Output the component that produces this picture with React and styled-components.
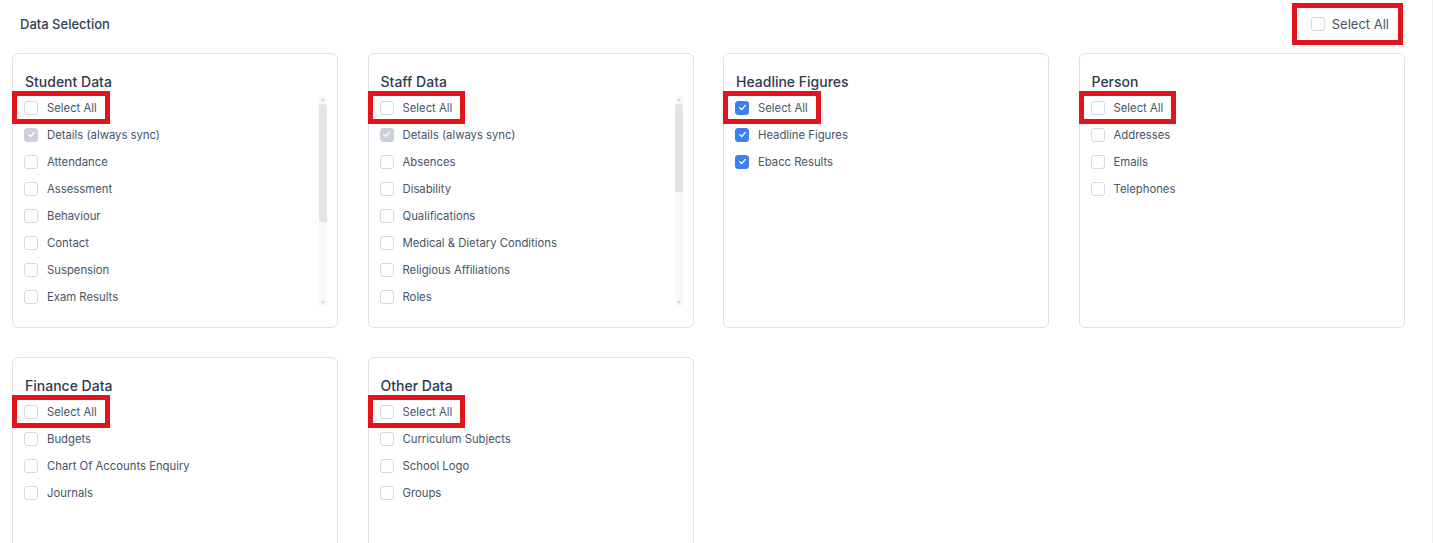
import React from "react";
import styled, { createGlobalStyle } from "styled-components";

const GlobalStyle = createGlobalStyle`
  html, body { margin: 0; padding: 0; background: #ffffff; }
  body { font-family: Inter, "Noto Sans", sans-serif; color: #344054; }
  * { box-sizing: border-box; }
`;

const Page = styled.div`
  width: 1433px;
  height: 543px;
  overflow: hidden;
  border-right: 1px solid #eef0f3;
`;

const Header = styled.div`
  height: 46px;
  display: flex;
  align-items: center;
  justify-content: space-between;
  padding: 0 29px 0 20px;
`;

const PageTitle = styled.h2`
  margin: 0;
  font-size: 13px;
  font-weight: 500;
  color: #344054;
  position: relative;
  top: 1px;
`;

const TopSelect = styled.label`
  height: 42px;
  display: flex;
  align-items: center;
  gap: 7px;
  border: 5px solid #e3141c;
  padding: 0 9px 0 14px;
  font-size: 13px;
  color: #475467;
  margin-top: 2px;
`;

const Grid = styled.div`
  margin-top: 7px;
  padding-left: 12px;
  display: grid;
  grid-template-columns: repeat(4, 326px);
  grid-auto-rows: 275px;
  column-gap: 29.5px;
  row-gap: 29px;
`;

const Card = styled.section`
  border: 1px solid #dde1e7;
  border-radius: 6px;
  padding: 19px 10px 0 11px;
  background: #fff;
  display: flex;
  flex-direction: column;
`;

const CardTitle = styled.h3`
  margin: 0 0 3px 1px;
  font-size: 14px;
  line-height: 18px;
  font-weight: 500;
  color: #2f3b4f;
`;

const ListArea = styled.div`
  display: flex;
  align-items: flex-start;
  height: 216px;
`;

const List = styled.div`
  flex: 1;
  min-width: 0;
`;

const ScrollTrack = styled.div`
  position: relative;
  width: 8px;
  height: 210px;
  margin-top: 2px;
  background: #f8f8f9;
  padding-top: 8px;

  &::before,
  &::after {
    content: "";
    position: absolute;
    left: 2px;
    border-left: 2px solid transparent;
    border-right: 2px solid transparent;
  }
  &::before {
    top: 2px;
    border-bottom: 3px solid #d6d6da;
  }
  &::after {
    bottom: 2px;
    border-top: 3px solid #d6d6da;
  }
`;

const ScrollThumb = styled.div`
  width: 8px;
  height: ${(p) => p.$size}px;
  background: #e4e4e8;
  border-radius: 3px 3px 1px 1px;
`;

const Row = styled.label`
  position: relative;
  display: inline-flex;
  align-items: center;
  gap: 9px;
  height: 27px;
  font-size: 11.3px;
  color: #475467;
  white-space: nowrap;
  vertical-align: top;
`;

const RowLine = styled.div`
  height: 27px;
`;

const Highlight = styled.span`
  position: absolute;
  left: -12px;
  right: -13px;
  top: -3px;
  bottom: -3px;
  border: 5px solid #e3141c;
  pointer-events: none;
`;

const Box = styled.span`
  width: 14px;
  height: 14px;
  flex: 0 0 14px;
  border-radius: 3px;
  border: 1px solid
    ${(p) => (p.$state === "on" ? "#3b7ff0" : p.$state === "locked" ? "#ccd0da" : "#d5d9e0")};
  background: ${(p) => (p.$state === "on" ? "#3b7ff0" : p.$state === "locked" ? "#ccd0da" : "#fff")};
  display: inline-flex;
  align-items: center;
  justify-content: center;
`;

function Check({ state }) {
  return (
    <Box $state={state}>
      {state !== "off" && (
        <svg width="9" height="9" viewBox="0 0 10 10" fill="none">
          <path d="M2 5.3L4.1 7.3L8 2.8" stroke="#fff" strokeWidth="1.4" strokeLinecap="round" strokeLinejoin="round" />
        </svg>
      )}
    </Box>
  );
}

const cards = [
  {
    title: "Student Data",
    thumb: 118,
    all: "off",
    items: [
      ["Details (always sync)", "locked"],
      ["Attendance"],
      ["Assessment"],
      ["Behaviour"],
      ["Contact"],
      ["Suspension"],
      ["Exam Results"],
    ],
  },
  {
    title: "Staff Data",
    thumb: 88,
    all: "off",
    items: [
      ["Details (always sync)", "locked"],
      ["Absences"],
      ["Disability"],
      ["Qualifications"],
      ["Medical & Dietary Conditions"],
      ["Religious Affiliations"],
      ["Roles"],
    ],
  },
  {
    title: "Headline Figures",
    all: "on",
    items: [["Headline Figures", "on"], ["Ebacc Results", "on"]],
  },
  {
    title: "Person",
    all: "off",
    items: [["Addresses"], ["Emails"], ["Telephones"]],
  },
  {
    title: "Finance Data",
    all: "off",
    items: [["Budgets"], ["Chart Of Accounts Enquiry"], ["Journals"]],
  },
  {
    title: "Other Data",
    all: "off",
    items: [["Curriculum Subjects"], ["School Logo"], ["Groups"]],
  },
];

export default function App() {
  return (
    <>
      <GlobalStyle />
      <Page>
        <Header>
          <PageTitle>Data Selection</PageTitle>
          <TopSelect>
            <Box $state="off" />
            Select All
          </TopSelect>
        </Header>
        <Grid>
          {cards.map((c) => (
            <Card key={c.title}>
              <CardTitle>{c.title}</CardTitle>
              <ListArea>
                <List>
                  <RowLine>
                    <Row>
                      <Check state={c.all} />
                      Select All
                      <Highlight />
                    </Row>
                  </RowLine>
                  {c.items.map(([label, state]) => (
                    <RowLine key={label}>
                      <Row>
                        <Check state={state || "off"} />
                        {label}
                      </Row>
                    </RowLine>
                  ))}
                </List>
                {c.thumb && (
                  <ScrollTrack>
                    <ScrollThumb $size={c.thumb} />
                  </ScrollTrack>
                )}
              </ListArea>
            </Card>
          ))}
        </Grid>
      </Page>
    </>
  );
}
